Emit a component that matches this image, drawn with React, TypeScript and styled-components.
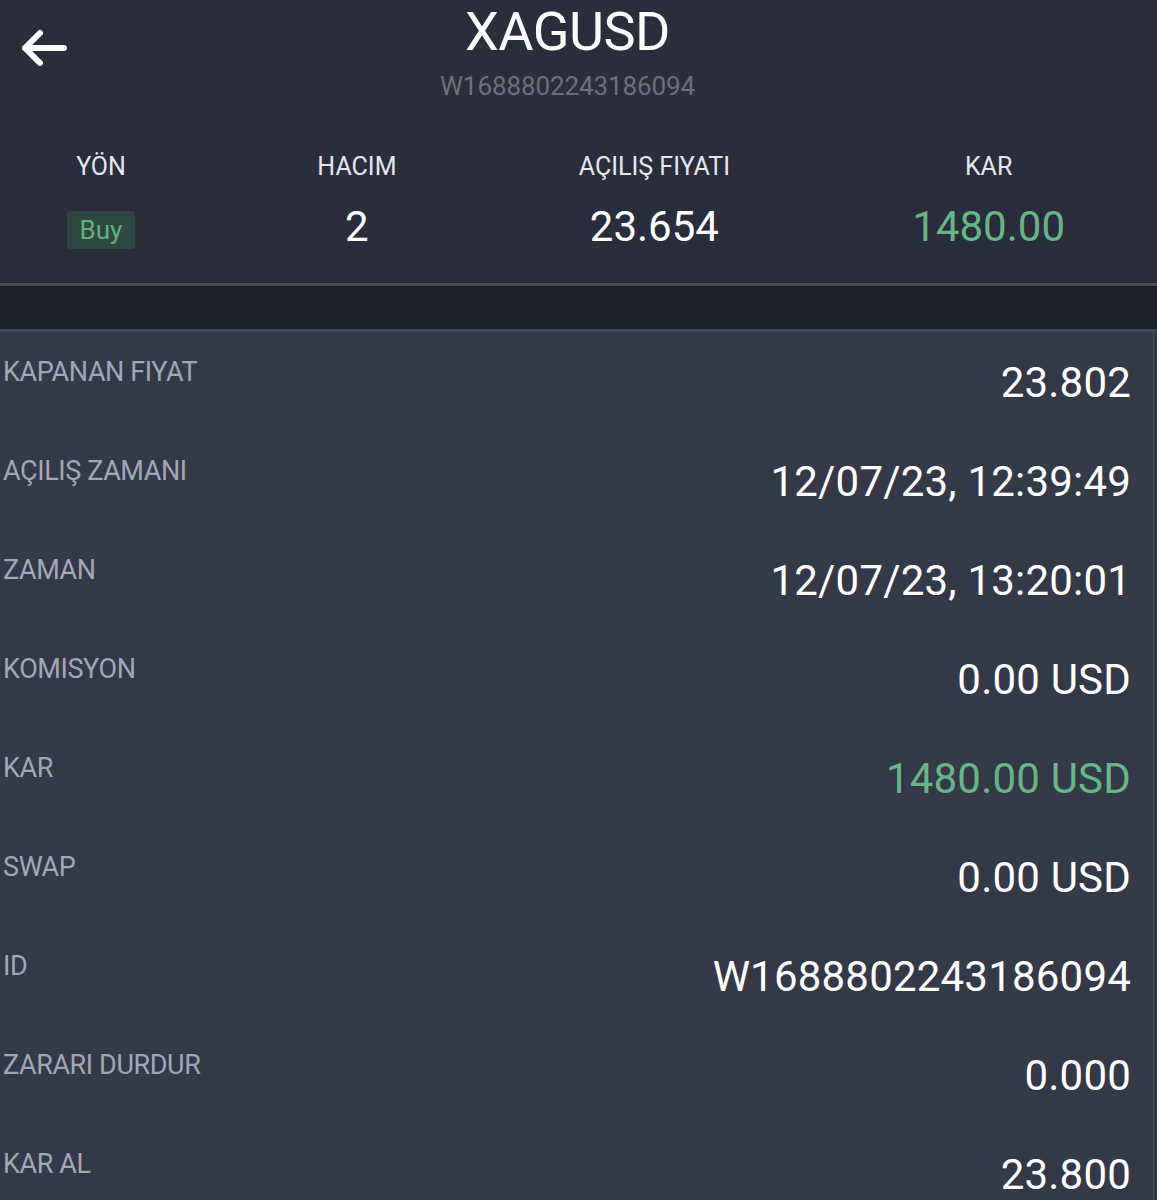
import React from "react";
import styled, { createGlobalStyle } from "styled-components";

const Global = createGlobalStyle`
  html, body { margin: 0; padding: 0; background: #343948; }
  body { font-family: Roboto, "Liberation Sans", sans-serif; -webkit-font-smoothing: antialiased; }
`;

const Page = styled.div`
  width: 1157px;
  min-height: 1200px;
  background: #343948;
  overflow: hidden;
`;

const Header = styled.header`
  background: #2a2d3b;
  height: 283px;
  display: flex;
  flex-direction: column;
`;

const TopBar = styled.div`
  display: grid;
  grid-template-columns: 1fr auto 1fr;
  padding-right: 22px;
`;

const BackButton = styled.button`
  background: none;
  border: none;
  padding: 0;
  margin: 28px 0 0 20px;
  width: 50px;
  height: 40px;
  justify-self: start;
  cursor: pointer;
  display: flex;
`;

const TitleBlock = styled.div`
  display: flex;
  flex-direction: column;
  align-items: center;
  padding-top: 5px;
`;

const Title = styled.h1`
  margin: 0;
  font-size: 54px;
  line-height: 54px;
  font-weight: 400;
  color: #ffffff;
  letter-spacing: -0.5px;
`;

const Subtitle = styled.div`
  margin-top: 14px;
  font-size: 26px;
  line-height: 26px;
  color: #6c6f7d;
  letter-spacing: -0.1px;
`;

const Stats = styled.div`
  display: flex;
  justify-content: space-between;
  padding: 0 92px 0 67px;
  margin-top: 55px;
`;

const Stat = styled.div`
  display: flex;
  flex-direction: column;
  align-items: center;
`;

const StatLabel = styled.div`
  font-size: 25px;
  line-height: 25px;
  color: #e6e7ec;
  white-space: nowrap;
`;

const StatValue = styled.div<{ $positive?: boolean }>`
  margin-top: 27px;
  font-size: 42px;
  line-height: 42px;
  color: ${(p) => (p.$positive ? "#68b688" : "#ffffff")};
  white-space: nowrap;
`;

const Badge = styled.div`
  margin-top: 32px;
  width: 68px;
  height: 38px;
  border-radius: 4px;
  background: #2e4740;
  color: #64b283;
  font-size: 26px;
  line-height: 38px;
  text-align: center;
`;

const Divider = styled.div`
  height: 3px;
  background: #4b4f5c;
`;

const Band = styled.div`
  height: 43px;
  background: #1d1f2b;
`;

const BandEdge = styled.div`
  height: 3px;
  background: #424756;
`;

const List = styled.div`
  border-right: 1px solid #474c5a;
  margin-right: 3px;
`;

const Row = styled.div`
  height: 99px;
  display: flex;
  justify-content: space-between;
  align-items: flex-start;
  padding: 27px 22px 0 3px;
  box-sizing: border-box;
`;

const RowLabel = styled.div`
  font-size: 27px;
  line-height: 27px;
  color: #a2a7b8;
  letter-spacing: -0.4px;
  white-space: nowrap;
`;

const RowValue = styled.div<{ $positive?: boolean }>`
  margin-top: 3px;
  font-size: 42px;
  line-height: 42px;
  letter-spacing: 0.2px;
  color: ${(p) => (p.$positive ? "#68b688" : "#ffffff")};
  white-space: nowrap;
`;

const rows: { label: string; value: string; positive?: boolean }[] = [
  { label: "KAPANAN FIYAT", value: "23.802" },
  { label: "AÇILIŞ ZAMANI", value: "12/07/23, 12:39:49" },
  { label: "ZAMAN", value: "12/07/23, 13:20:01" },
  { label: "KOMISYON", value: "0.00 USD" },
  { label: "KAR", value: "1480.00 USD", positive: true },
  { label: "SWAP", value: "0.00 USD" },
  { label: "ID", value: "W1688802243186094" },
  { label: "ZARARI DURDUR", value: "0.000" },
  { label: "KAR AL", value: "23.800" },
];

export default function App() {
  return (
    <Page>
      <Global />
      <Header>
        <TopBar>
          <BackButton aria-label="Geri">
            <svg width="50" height="40" viewBox="0 0 50 40">
              <path
                d="M44 20 H5 M20 5 L5 20 L20 35"
                fill="none"
                stroke="#ffffff"
                strokeWidth="6"
                strokeLinecap="round"
                strokeLinejoin="round"
              />
            </svg>
          </BackButton>
          <TitleBlock>
            <Title>XAGUSD</Title>
            <Subtitle>W1688802243186094</Subtitle>
          </TitleBlock>
          <div />
        </TopBar>
        <Stats>
          <Stat>
            <StatLabel>YÖN</StatLabel>
            <Badge>Buy</Badge>
          </Stat>
          <Stat>
            <StatLabel>HACIM</StatLabel>
            <StatValue>2</StatValue>
          </Stat>
          <Stat>
            <StatLabel>AÇILIŞ FIYATI</StatLabel>
            <StatValue>23.654</StatValue>
          </Stat>
          <Stat>
            <StatLabel>KAR</StatLabel>
            <StatValue $positive>1480.00</StatValue>
          </Stat>
        </Stats>
      </Header>
      <Divider />
      <Band />
      <BandEdge />
      <List>
        {rows.map((r) => (
          <Row key={r.label}>
            <RowLabel>{r.label}</RowLabel>
            <RowValue $positive={r.positive}>{r.value}</RowValue>
          </Row>
        ))}
      </List>
    </Page>
  );
}
